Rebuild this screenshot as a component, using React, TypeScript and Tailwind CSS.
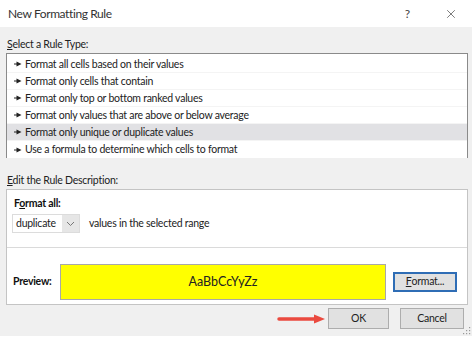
import { X } from 'lucide-react'

const ruleTypes = [
  'Format all cells based on their values',
  'Format only cells that contain',
  'Format only top or bottom ranked values',
  'Format only values that are above or below average',
  'Format only unique or duplicate values',
  'Use a formula to determine which cells to format',
]

function Pointer() {
  return (
    <svg width="8" height="6" viewBox="0 0 8 6" className="flex-shrink-0">
      <path d="M0 3h3.5" stroke="#222" strokeWidth="1" />
      <path d="M2.5 0.5L7.5 3L2.5 5.5Z" fill="#222" />
    </svg>
  )
}

function RuleRow({ label, selected }: { label: string; selected?: boolean }) {
  return (
    <div
      className={`flex items-center gap-[3px] h-[17px] pl-[7px] border-b border-[#f4f4f4] last:border-0 ${
        selected ? 'bg-[#e1e1e4]' : 'bg-white'
      }`}
    >
      <Pointer />
      <span className="text-[10.5px] tracking-[-0.25px] text-[#222] leading-none">{label}</span>
    </div>
  )
}

function Chevron() {
  return (
    <svg width="9" height="6" viewBox="0 0 9 6">
      <path d="M1 1l3.5 3.5L8 1" stroke="#777" strokeWidth="1" fill="none" />
    </svg>
  )
}

function Arrow() {
  return (
    <svg width="50" height="10" viewBox="0 0 50 10" className="mr-[1px]">
      <path d="M2 5h38" stroke="#ea4a3f" strokeWidth="3.5" strokeLinecap="round" />
      <path d="M37 0.5L48 5L37 9.5Z" fill="#ea4a3f" />
    </svg>
  )
}

export default function App() {
  return (
    <div
      className="w-[474px] h-[338px] bg-white overflow-hidden relative text-[#1e1e1e]"
      style={{ fontFamily: 'Lato, "Noto Sans", sans-serif' }}
    >
      <div className="h-[27px] flex items-center pl-[8px] pr-[16px]">
        <span className="text-[12px] tracking-[-0.4px] text-[#333] flex-1">New Formatting Rule</span>
        <span className="text-[12px] text-[#444] mr-[34px]">?</span>
        <X className="h-[14px] w-[14px] text-[#444]" strokeWidth={1.2} />
      </div>

      <div className="w-[472px] h-[309px] bg-[#f0f0f0] pl-[6px] pr-[4px] pt-[10px] relative text-[10.5px] tracking-[-0.25px]">
        <div className="leading-[14px] text-[#222] pl-[1px]">
          <span className="underline">S</span>elect a Rule Type:
        </div>
        <div className="mt-[2px] h-[105px] border border-[#8a8a8a] bg-white pt-[2px]">
          {ruleTypes.map((r, i) => (
            <RuleRow key={r} label={r} selected={i === 4} />
          ))}
        </div>

        <div className="mt-[15px] leading-[14px] text-[#222] pl-[1px]">
          <span className="underline">E</span>dit the Rule Description:
        </div>
        <div className="mt-[2px] h-[116px] border border-[#c4c4c4] bg-white">
          <div className="h-[58px] border-b border-[#dadada] pl-[7px] pt-[6px]">
            <div className="font-bold leading-[14px] text-[#111]">
              F<span className="underline">o</span>rmat all:
            </div>
            <div className="flex items-center mt-[4px] -ml-[2px]">
              <div className="flex h-[19px] w-[68px] border border-[#dcdcdc]">
                <div className="flex-1 flex items-center pl-[3px] text-[#222]">duplicate</div>
                <div className="w-[17px] bg-[#e6e6e6] flex items-center justify-center">
                  <Chevron />
                </div>
              </div>
              <span className="ml-[9px] text-[#222]">values in the selected range</span>
            </div>
          </div>
          <div className="flex items-center pl-[6px] pt-[16px]">
            <span className="w-[47px] font-bold text-[#111]">Preview:</span>
            <div className="w-[326px] h-[36px] border border-[#a8a8a8] bg-[#ffff00] flex items-center justify-center text-[12.5px] tracking-normal text-[#222]">
              AaBbCcYyZz
            </div>
            <button className="ml-[7px] w-[64px] h-[20px] border-2 border-[#2f6db5] bg-[#e1e1e1] text-[#222] flex items-center justify-center">
              <span className="underline">F</span>ormat...
            </button>
          </div>
        </div>

        <div className="flex items-center justify-end mt-[3px] pr-[4px]">
          <Arrow />
          <button className="w-[61px] h-[21px] border border-[#adadad] bg-[#e1e1e1] text-[#222]">
            OK
          </button>
          <button className="ml-[11px] w-[64px] h-[21px] border border-[#adadad] bg-[#e1e1e1] text-[#222]">
            Cancel
          </button>
        </div>

        <svg width="8" height="8" viewBox="0 0 8 8" className="absolute right-[1px] bottom-[1px]">
          <rect x="6" y="0" width="1.2" height="1.2" fill="#999" />
          <rect x="3" y="3" width="1.2" height="1.2" fill="#999" />
          <rect x="6" y="3" width="1.2" height="1.2" fill="#999" />
          <rect x="0" y="6" width="1.2" height="1.2" fill="#999" />
          <rect x="3" y="6" width="1.2" height="1.2" fill="#999" />
          <rect x="6" y="6" width="1.2" height="1.2" fill="#999" />
        </svg>
      </div>
    </div>
  )
}
